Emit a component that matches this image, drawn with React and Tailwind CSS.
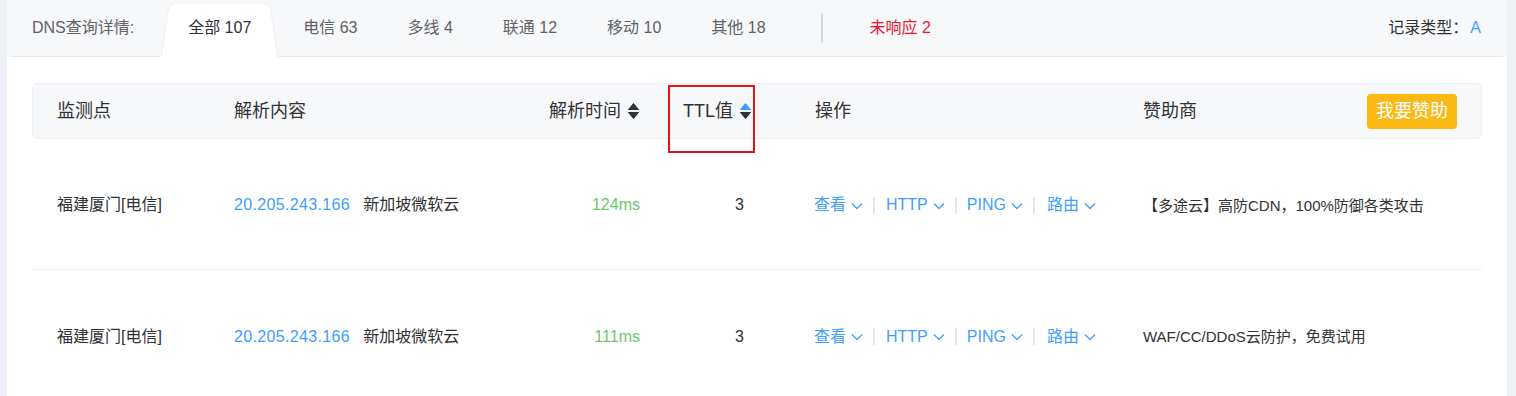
import React from "react";

const FONT = { fontFamily: '"Liberation Sans", "Noto Sans CJK SC", sans-serif' };

function SortIcon({ upActive }) {
  return (
    <svg width="13" height="18" viewBox="0 0 13 18" className="ml-[6px]">
      <path d="M6.5 1.5 L11.5 7.5 L1.5 7.5 Z" fill={upActive ? "#409eff" : "#303133"} stroke={upActive ? "#409eff" : "#303133"} strokeLinejoin="round" strokeWidth="1" />
      <path d="M1.5 10.5 L11.5 10.5 L6.5 16.5 Z" fill="#303133" stroke="#303133" strokeLinejoin="round" strokeWidth="1" />
    </svg>
  );
}

function Chevron() {
  return (
    <svg width="12" height="8" viewBox="0 0 12 8" className="ml-[5px] mt-[1px]">
      <path d="M1 1.5 L6 6.5 L11 1.5" fill="none" stroke="#409eff" strokeWidth="1.3" />
    </svg>
  );
}

function Divider() {
  return <span className="w-[2px] h-[17px] bg-[#e6e8ec] mx-[10px]" />;
}

function Ops() {
  return (
    <div className="flex items-center text-[#409eff]">
      <span>查看</span>
      <Chevron />
      <Divider />
      <span className="ml-[1px]">HTTP</span>
      <Chevron />
      <Divider />
      <span>PING</span>
      <Chevron />
      <Divider />
      <span className="ml-[2px]">路由</span>
      <Chevron />
    </div>
  );
}

function Row({ time, sponsor, last }) {
  return (
    <div className={`grid grid-cols-[177px_290px_116px_175px_328px_1fr] items-center pl-[25px] h-[131px] pt-[2px] text-[16px] text-[#303133] ${last ? "" : "border-b border-[#ebeef5]"}`}>
      <div>福建厦门[电信]</div>
      <div className="flex items-center">
        <span className="text-[#409eff] tracking-[0.35px]">20.205.243.166</span>
        <span className="ml-[13px]">新加坡微软云</span>
      </div>
      <div className="text-right text-[#6cc86c]">{time}</div>
      <div className="pl-[95px]">3</div>
      <div className="-ml-[1px]"><Ops /></div>
      <div className="text-[15px]">{sponsor}</div>
    </div>
  );
}

export default function App() {
  const tabs = ["电信 63", "多线 4", "联通 12", "移动 10", "其他 18"];
  return (
    <div className="relative w-[1516px] h-[396px] overflow-hidden bg-[#eef1f5] leading-none" style={FONT}>
      <div className="ml-[7px] w-[1500px] h-full bg-white">
        {/* tab bar */}
        <div className="flex items-stretch h-[57px] bg-[#f7f8fa] border-b border-[#e9ebef] rounded-b-[5px] pl-[25px] pr-[26px] text-[16px]">
          <div className="flex items-center text-[#606266]">DNS查询详情:</div>
          <div className="relative ml-[27px] w-[117px] flex items-center justify-center text-[#303133]">
            <svg width="117" height="55" viewBox="0 0 117 55" className="absolute left-0 top-[3px]">
              <path d="M0 55 L7 8 Q8.2 0 16 0 L101 0 Q108.8 0 110 8 L117 55 Z" fill="#ffffff" stroke="#eceef2" strokeWidth="1" />
              <rect x="0" y="53" width="117" height="3" fill="#ffffff" />
            </svg>
            <span className="relative">全部 107</span>
          </div>
          {tabs.map((t) => (
            <div key={t} className="flex items-center px-[25px] text-[#606266]">{t}</div>
          ))}
          <div className="flex items-center ml-[30px] mr-[22px]">
            <span className="w-[2px] h-[30px] bg-[#d6d8dc]" />
          </div>
          <div className="flex items-center pl-[25px] text-[#f0142f]">未响应 2</div>
          <div className="ml-auto flex items-center text-[#303133]">
            记录类型：<span className="ml-[2px] text-[#409eff]">A</span>
          </div>
        </div>

        <div className="px-[25px] pt-[26px]">
          {/* header */}
          <div className="grid grid-cols-[177px_290px_116px_175px_328px_1fr] items-center h-[56px] pl-[24px] pr-[24px] bg-[#f7f8fa] border border-[#ebeef5] rounded-[6px] text-[18px] text-[#303133]">
            <div>监测点</div>
            <div>解析内容</div>
            <div className="flex items-center justify-end">解析时间<SortIcon /></div>
            <div className="flex items-center pl-[43px]">TTL值<SortIcon upActive /></div>
            <div>操作</div>
            <div className="flex items-center justify-between">
              <span>赞助商</span>
              <span className="h-[35px] px-[9px] flex items-center rounded-[4px] bg-[#fbb914] text-white text-[18px]">我要赞助</span>
            </div>
          </div>
          <Row time="124ms" sponsor="【多途云】高防CDN，100%防御各类攻击" />
          <Row time="111ms" sponsor="WAF/CC/DDoS云防护，免费试用" last />
        </div>
      </div>
      {/* annotation box */}
      <div className="absolute left-[668px] top-[85px] w-[87px] h-[68px] border-2 border-[#e5141b]" />
    </div>
  );
}
